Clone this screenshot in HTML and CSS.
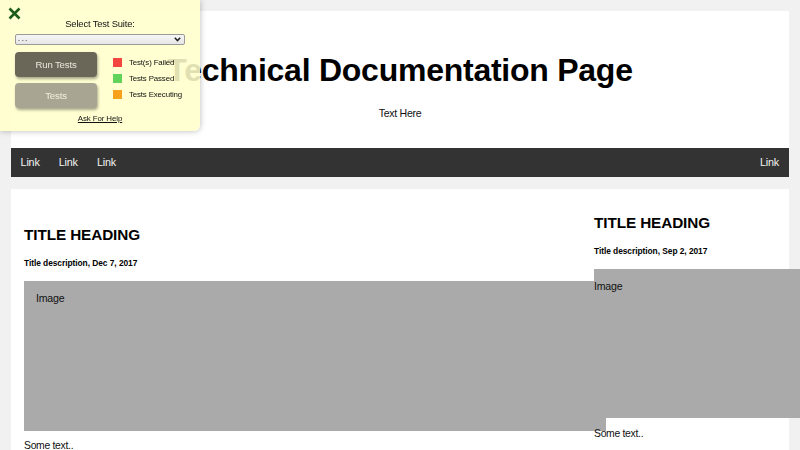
FILE: index.html
```html
<!DOCTYPE html>
<html lang="en">
<head>
<meta charset="utf-8">
<title>Technical Documentation Page</title>
<link rel="stylesheet" href="styles.css">
</head>
<body>
<header class="header">
  <h1 class="title">Technical Documentation Page</h1>
  <p class="subtitle">Text Here</p>
</header>

<nav class="topnav">
  <div class="nav-left">
    <a href="#">Link</a>
    <a href="#">Link</a>
    <a href="#">Link</a>
  </div>
  <a href="#" class="nav-right">Link</a>
</nav>

<main class="content">
  <section class="leftcolumn">
    <h2 class="card-title">TITLE HEADING</h2>
    <h5 class="card-desc">Title description, Dec 7, 2017</h5>
    <div class="fakeimg">Image</div>
    <p class="card-text">Some text..</p>
  </section>
  <section class="rightcolumn">
    <h2 class="card-title">TITLE HEADING</h2>
    <h5 class="card-desc">Title description, Sep 2, 2017</h5>
    <div class="fakeimg fakeimg-side">Image</div>
    <p class="card-text">Some text..</p>
  </section>
</main>

<aside class="test-panel">
  <button class="close-btn" aria-label="Close">
    <svg width="13" height="13" viewBox="0 0 13 13"><path d="M1.5 1.5 L11.5 11.5 M11.5 1.5 L1.5 11.5" stroke="#1b5d1b" stroke-width="2.6" stroke-linecap="butt" fill="none"/></svg>
  </button>
  <div class="panel-title">Select Test Suite:</div>
  <div class="fake-select">
    <span>- - -</span>
    <svg width="7" height="5" viewBox="0 0 7 5"><path d="M0.8 0.8 L3.5 3.6 L6.2 0.8" stroke="#222" stroke-width="1.5" fill="none"/></svg>
  </div>
  <div class="panel-row">
    <div class="btn-col">
      <div class="btn btn-run">Run Tests</div>
      <div class="btn btn-tests">Tests</div>
    </div>
    <ul class="legend">
      <li><span class="sw sw-red"></span>Test(s) Failed</li>
      <li><span class="sw sw-green"></span>Tests Passed</li>
      <li><span class="sw sw-orange"></span>Tests Executing</li>
    </ul>
  </div>
  <a href="#" class="help">Ask For Help</a>
</aside>
</body>
</html>
```

FILE: styles.css
```css
html, body {
  margin: 0;
}
html {
  overflow: hidden;
}
body {
  padding: 11px;
  background: #f1f1f1;
  font-family: "Liberation Sans", Arial, sans-serif;
  color: #111;
  font-size: 10px;
}

/* Header */
.header {
  background: #fff;
  height: 137px;
  box-sizing: border-box;
  padding-top: 43px;
  text-align: center;
}
.title {
  margin: 0;
  font-size: 32px;
  line-height: 32px;
  font-weight: bold;
  color: #000;
  letter-spacing: -0.25px;
}
.subtitle {
  margin: 21px 0 0;
  font-size: 10.6px;
  line-height: 12px;
  letter-spacing: -0.3px;
}

/* Nav */
.topnav {
  background: #333;
  height: 29px;
  display: flex;
  justify-content: space-between;
}
.nav-left {
  display: flex;
}
.topnav a,
.topnav a:visited {
  color: #f2f2f2;
  text-decoration: none;
  font-size: 10.8px;
  letter-spacing: -0.2px;
  line-height: 29px;
  padding: 0 9.6px;
}
.topnav .nav-right {
  padding-right: 10px;
}

/* Content */
.content {
  margin-top: 12px;
  background: #fff;
  display: grid;
  grid-template-columns: 583px 1fr;
  height: 300px;
}
.leftcolumn {
  padding: 37px 0 0 13px;
  min-width: 0;
}
.rightcolumn {
  padding-top: 25px;
  min-width: 0;
}
.card-title {
  margin: 0;
  font-size: 15.3px;
  line-height: 17px;
  font-weight: bold;
  color: #000;
  letter-spacing: -0.1px;
}
.card-desc {
  margin: 15px 0 0;
  font-size: 8.4px;
  line-height: 10px;
  font-weight: bold;
  color: #000;
  letter-spacing: -0.05px;
}
.fakeimg {
  margin-top: 12.5px;
  background: #aaa;
  width: 582px;
  height: 150px;
  box-sizing: border-box;
  padding: 11px 12px;
  font-size: 10.6px;
  letter-spacing: -0.2px;
  line-height: 12px;
  color: #111;
}
.fakeimg-side {
  width: calc(100% + 11px);
  height: 149px;
  padding-left: 0;
}
.card-text {
  margin: 9px 0 0;
  font-size: 10.4px;
  letter-spacing: -0.3px;
  line-height: 12px;
}
.rightcolumn .card-text {
  margin-top: 10px;
}

/* Test panel overlay */
.test-panel {
  position: fixed;
  top: 0;
  left: 0;
  width: 200px;
  height: 131px;
  box-sizing: border-box;
  padding: 18px 15px 0;
  background: rgba(255, 255, 204, 0.88);
  border-bottom-right-radius: 6px;
  box-shadow: 0 0 6px rgba(0, 0, 0, 0.28);
  display: flex;
  flex-direction: column;
}
.close-btn {
  position: absolute;
  left: 8px;
  top: 7px;
  padding: 0;
  border: 0;
  background: none;
  width: 13px;
  height: 13px;
  display: block;
}
.close-btn svg {
  display: block;
}
.panel-title {
  text-align: center;
  font-size: 9.4px;
  letter-spacing: -0.15px;
  line-height: 11px;
  color: #111;
}
.fake-select {
  margin-top: 5px;
  height: 11px;
  box-sizing: border-box;
  border: 1px solid #9a9a9a;
  border-radius: 2px;
  background: linear-gradient(#f6f6f6, #e6e6e6);
  display: flex;
  align-items: center;
  justify-content: space-between;
  padding: 0 3px 0 2px;
  font-size: 6px;
  color: #333;
}
.fake-select svg {
  display: block;
}
.panel-row {
  margin-top: 7px;
  display: flex;
  gap: 16px;
}
.btn-col {
  display: flex;
  flex-direction: column;
  gap: 6px;
}
.btn {
  width: 82px;
  height: 25px;
  border-radius: 4px;
  display: flex;
  align-items: center;
  justify-content: center;
  font-size: 9.6px;
  letter-spacing: -0.15px;
  box-shadow: 1px 2px 3px rgba(0, 0, 0, 0.35);
}
.btn-run {
  background: #6a6758;
  color: #e9e8dc;
}
.btn-tests {
  background: #a8a692;
  color: #f0efdf;
}
.legend {
  list-style: none;
  margin: 6px 0 0;
  padding: 0;
  display: flex;
  flex-direction: column;
  gap: 7px;
}
.legend li {
  display: flex;
  align-items: center;
  gap: 7px;
  font-size: 7.9px;
  letter-spacing: -0.15px;
  line-height: 9px;
  color: #111;
}
.sw {
  width: 9px;
  height: 9px;
  display: block;
}
.sw-red { background: #f2463f; }
.sw-green { background: #5fd35a; }
.sw-orange { background: #f8a11a; }
.help {
  margin-top: 6px;
  align-self: center;
  font-size: 7.9px;
  letter-spacing: -0.1px;
  line-height: 10px;
  color: #111;
  text-decoration: underline;
}
```
